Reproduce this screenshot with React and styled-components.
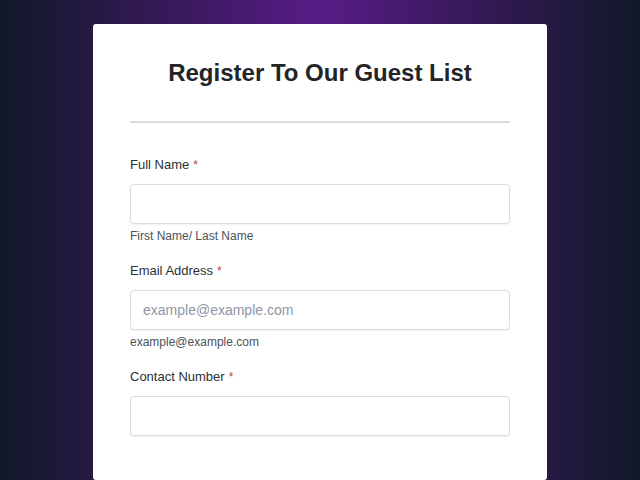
import React from "react";
import styled, { createGlobalStyle } from "styled-components";

const Global = createGlobalStyle`
  html, body { margin: 0; padding: 0; height: 100%; }
  body {
    font-family: "Liberation Sans", Arial, sans-serif;
    background: linear-gradient(to right, #111827 0%, #581c87 50%, #111827 100%);
    min-height: 480px;
    overflow: hidden;
  }
  #root { min-height: 480px; }
`;

const Page = styled.div`
  display: flex;
  justify-content: center;
  padding-top: 24px;
  min-height: 456px;
`;

const Card = styled.form`
  width: 454px;
  box-sizing: border-box;
  background: #ffffff;
  border-radius: 3px;
  padding: 35px 37px 40px;
  display: flex;
  flex-direction: column;
`;

const Title = styled.h1`
  margin: 0;
  font-family: "Liberation Sans", Arial, sans-serif;
  font-weight: 700;
  font-size: 24px;
  line-height: 28px;
  color: #222427;
  text-align: center;
`;

const Divider = styled.hr`
  margin: 34px 0 32px;
  border: none;
  height: 2px;
  background: #dcdcdc;
`;

const Fields = styled.div`
  display: flex;
  flex-direction: column;
  gap: 17px;
`;

const Field = styled.div`
  display: flex;
  flex-direction: column;
`;

const Label = styled.label`
  font-size: 13px;
  line-height: 20px;
  color: #2c3038;
  margin-bottom: 9px;
`;

const Req = styled.span`
  color: #b54747;
  margin-left: 4px;
  font-size: 12px;
`;

const Input = styled.input`
  box-sizing: border-box;
  width: 100%;
  height: 40px;
  border: 1px solid #dadde2;
  border-radius: 4px;
  box-shadow: 0 1px 2px rgba(0, 0, 0, 0.06);
  padding: 0 12px;
  font-family: "Liberation Sans", Arial, sans-serif;
  font-size: 14px;
  color: #333;
  background: #fff;
  outline: none;
  &::placeholder { color: #8f97a6; }
`;

const Help = styled.div`
  margin-top: 4px;
  font-size: 12px;
  line-height: 16px;
  color: #4d525a;
`;

function FormField({ label, placeholder, help, type = "text" }) {
  return (
    <Field>
      <Label>
        {label}
        <Req>*</Req>
      </Label>
      <Input type={type} placeholder={placeholder} />
      {help && <Help>{help}</Help>}
    </Field>
  );
}

export default function App() {
  return (
    <>
      <Global />
      <Page>
        <Card onSubmit={(e) => e.preventDefault()}>
          <Title>Register To Our Guest List</Title>
          <Divider />
          <Fields>
            <FormField label="Full Name" help="First Name/ Last Name" />
            <FormField
              label="Email Address"
              type="email"
              placeholder="example@example.com"
              help="example@example.com"
            />
            <FormField label="Contact Number" type="tel" />
          </Fields>
        </Card>
      </Page>
    </>
  );
}
